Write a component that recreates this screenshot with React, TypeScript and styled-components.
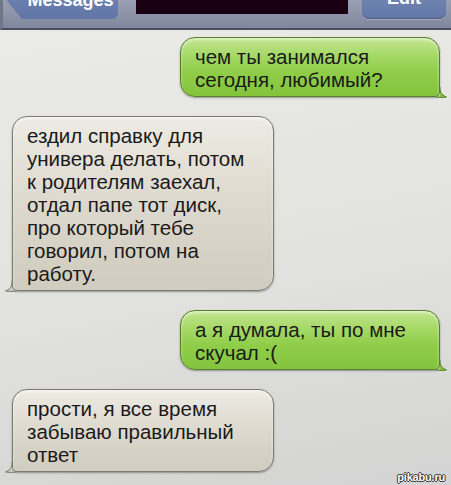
import React from "react";
import styled, { createGlobalStyle } from "styled-components";

type Side = "left" | "right";

interface Message {
  side: Side;
  lines: string[];
}

const messages: Message[] = [
  { side: "right", lines: ["чем ты занимался", "сегодня, любимый?"] },
  {
    side: "left",
    lines: [
      "ездил справку для",
      "универа делать, потом",
      "к родителям заехал,",
      "отдал папе тот диск,",
      "про который тебе",
      "говорил, потом на",
      "работу.",
    ],
  },
  { side: "right", lines: ["а я думала, ты по мне", "скучал :("] },
  {
    side: "left",
    lines: ["прости, я все время", "забываю правильный", "ответ"],
  },
];

const GlobalStyle = createGlobalStyle`
  html, body {
    margin: 0;
    padding: 0;
  }
  body {
    width: 451px;
    height: 485px;
    overflow: hidden;
    font-family: "Liberation Sans", Arial, sans-serif;
    background: #dcdcda;
  }
`;

const Screen = styled.div`
  position: relative;
  width: 451px;
  height: 485px;
  display: flex;
  flex-direction: column;
  background: linear-gradient(170deg, #ebebe8 0%, #e2e2df 55%, #d3d3d3 100%);
`;

const NavBar = styled.header`
  height: 28px;
  flex-shrink: 0;
  display: flex;
  align-items: flex-start;
  overflow: hidden;
  background: linear-gradient(#9aa0b3, #80879d);
  border-bottom: 2px solid #4a4e5d;
  border-left: 3px solid #70768a;
`;

const BackButton = styled.div`
  margin: -17px 0 0 4px;
  width: 111px;
  height: 36px;
  box-sizing: border-box;
  padding: 9px 0 0 16px;
  text-align: center;
  background: linear-gradient(#7387b6, #6075a5);
  clip-path: polygon(0 50%, 15px 0, 100% 0, 100% 100%, 15px 100%);
  border-radius: 0 0 6px 0;
  color: #fff;
  font-weight: bold;
  font-size: 18px;
  line-height: 16px;
`;

const TitleBlock = styled.div`
  margin-left: 18px;
  width: 212px;
  height: 14px;
  background: #1b0013;
`;

const EditButton = styled.div`
  margin: -10px 5px 0 auto;
  width: 84px;
  height: 29px;
  box-sizing: border-box;
  text-align: center;
  border-radius: 7px;
  background: linear-gradient(#7589b7, #6377a6);
  box-shadow: 0 1px 0 rgba(255, 255, 255, 0.25), inset 0 -1px 1px rgba(0, 0, 0, 0.2);
  color: #fff;
  font-weight: bold;
  font-size: 18px;
  line-height: 16px;
`;

const Thread = styled.main`
  display: flex;
  flex-direction: column;
  padding: 7px 11px 0 12px;
  gap: 19px;
`;

const Bubble = styled.div<{ $side: Side }>`
  position: relative;
  align-self: ${(p) => (p.$side === "right" ? "flex-end" : "flex-start")};
  width: ${(p) => (p.$side === "right" ? 260 : 262)}px;
  box-sizing: border-box;
  padding: 7px 8px 5px 14px;
  border-radius: ${(p) => (p.$side === "right" ? "15px 15px 5px 15px" : "15px 15px 15px 5px")};
  border: 1px solid ${(p) => (p.$side === "right" ? "#567f2c" : "#7c7a72")};
  background: ${(p) =>
    p.$side === "right"
      ? "linear-gradient(#c2e58f 0%, #a6d967 30%, #8fcd48 60%, #84c43d 100%)"
      : "linear-gradient(#eeebe4 0%, #e2ded4 35%, #d8d3c7 70%, #d1ccc0 100%)"};
  box-shadow: 0 1px 2px rgba(0, 0, 0, 0.35),
    inset 0 2px 3px rgba(255, 255, 255, 0.55);
  color: #1a1a1a;
  font-size: 20.5px;
  line-height: 23px;
  white-space: nowrap;
`;

const Tail = styled.svg<{ $side: Side }>`
  position: absolute;
  bottom: -2px;
  width: 14px;
  height: 14px;
  ${(p) => (p.$side === "right" ? "right: -8px;" : "left: -8px; transform: scaleX(-1);")}
`;

const Watermark = styled.div`
  position: absolute;
  right: 6px;
  bottom: 2px;
  color: #fff;
  font-size: 11px;
  font-weight: bold;
  letter-spacing: -0.2px;
  text-shadow: 1px 0 0 #333, -1px 0 0 #333, 0 1px 0 #333, 0 -1px 0 #333;
`;

const BubbleTail: React.FC<{ side: Side }> = ({ side }) => {
  const fill = side === "right" ? "#84c43d" : "#d1ccc0";
  const stroke = side === "right" ? "#567f2c" : "#7c7a72";
  return (
    <Tail $side={side} viewBox="0 0 14 14">
      <path
        d="M0 12.5 L7 12.5 L7 0 L7 6 Q8 11 13.5 13 Q8 14 4 12.5 L0 12.5 Z"
        fill={fill}
      />
      <path
        d="M7 3 L7 6 Q8 11 13.5 13 Q8 14 3 13"
        fill="none"
        stroke={stroke}
        strokeWidth="1"
      />
    </Tail>
  );
};

export default function App() {
  return (
    <>
      <GlobalStyle />
      <Screen>
        <NavBar>
          <BackButton>Messages</BackButton>
          <TitleBlock />
          <EditButton>Edit</EditButton>
        </NavBar>
        <Thread>
          {messages.map((m, i) => (
            <Bubble key={i} $side={m.side}>
              {m.lines.map((line, j) => (
                <div key={j}>{line}</div>
              ))}
              <BubbleTail side={m.side} />
            </Bubble>
          ))}
        </Thread>
        <Watermark>pikabu.ru</Watermark>
      </Screen>
    </>
  );
}
